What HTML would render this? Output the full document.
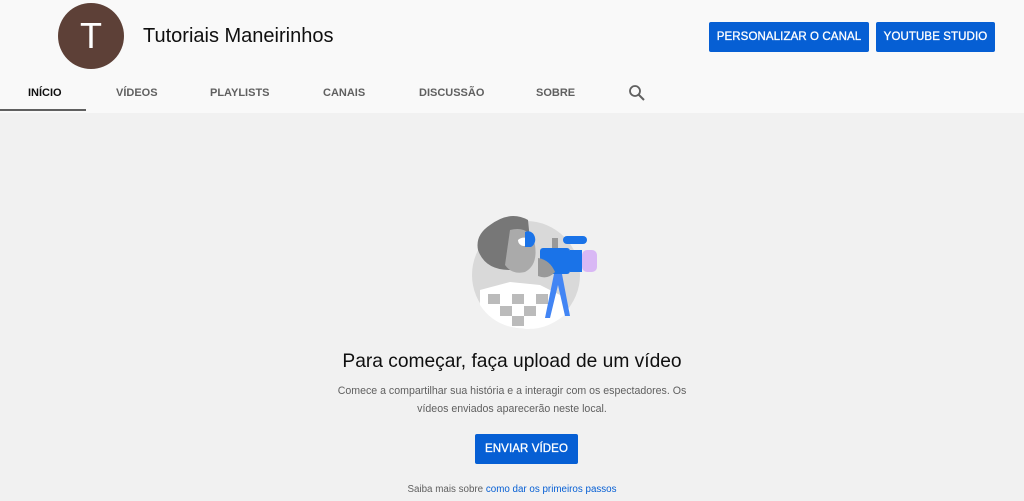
<!DOCTYPE html>
<html><head><meta charset="utf-8"><style>
*{margin:0;padding:0;box-sizing:border-box}
body{width:1024px;height:501px;overflow:hidden;background:#f1f1f1;font-family:"Liberation Sans",Arial,sans-serif;position:relative}
.hdr{position:absolute;left:0;top:0;width:1024px;height:113px;background:#f9f9f9}
.av{position:absolute;left:58px;top:3px;width:66px;height:66px;border-radius:50%;background:#5d4037;color:#fff;font-size:36px;text-align:center;line-height:66px}
.name{position:absolute;left:143px;top:25px;font-size:20px;color:#0f0f0f}
.btn{position:absolute;background:#065fd4;color:#fff;font-size:11.5px;text-align:center;border-radius:2px;letter-spacing:.1px;-webkit-text-stroke:.3px #fff}
.tab{position:absolute;top:87px;font-size:11px;font-weight:bold;color:#606060}
.ul{position:absolute;left:0;top:109px;width:86px;height:2px;background:#606060}
.c{position:absolute;left:0;width:1024px;text-align:center}
</style></head><body>
<div class="hdr">
<div class="av">T</div>
<div class="name">Tutoriais Maneirinhos</div>
<div class="btn" style="left:709px;top:22px;width:160px;height:30px;line-height:30px">PERSONALIZAR O CANAL</div>
<div class="btn" style="left:876px;top:22px;width:119px;height:30px;line-height:30px">YOUTUBE STUDIO</div>
<div class="tab" style="left:28px;color:#0f0f0f">INÍCIO</div>
<div class="tab" style="left:116px">VÍDEOS</div>
<div class="tab" style="left:210px">PLAYLISTS</div>
<div class="tab" style="left:323px">CANAIS</div>
<div class="tab" style="left:419px">DISCUSSÃO</div>
<div class="tab" style="left:536px">SOBRE</div>
<svg style="position:absolute;left:628px;top:84px" width="18" height="18" viewBox="0 0 18 18"><circle cx="7" cy="7" r="5" fill="none" stroke="#606060" stroke-width="1.8"/><path d="M10.5 10.5L16 16" stroke="#606060" stroke-width="2"/></svg>
<div class="ul"></div>
</div>
<svg style="position:absolute;left:470px;top:210px" width="130" height="120" viewBox="0 0 130 120">
<circle cx="56" cy="65" r="54" fill="#d9d9d9"/>
<path d="M10 80 L40 72 L70 75 L90 85 L100 100 Q80 120 56 119 Q25 118 10 95Z" fill="#fff"/>
<g fill="#bbb"><rect x="18" y="84" width="12" height="10"/><rect x="42" y="84" width="12" height="10"/><rect x="66" y="84" width="12" height="10"/><rect x="30" y="96" width="12" height="10"/><rect x="54" y="96" width="12" height="10"/><rect x="42" y="106" width="12" height="10"/></g>
<path d="M20 15 Q40 0 58 10 L60 30 Q50 50 40 60 Q15 60 8 40 Q5 25 20 15Z" fill="#777"/>
<path d="M40 20 Q60 15 65 35 Q68 55 55 62 Q42 65 35 55Z" fill="#aaa"/>
<path d="M48 30 a8 7 0 0 1 12 0 a6 6 0 0 1 -12 0Z" fill="#fff"/>
<path d="M55 22 a7 8 0 0 1 6 15 l-6 0Z" fill="#1a73e8"/>
<rect x="93" y="26" width="24" height="8" rx="4" fill="#1a73e8"/>
<rect x="82" y="28" width="6" height="12" fill="#999"/>
<rect x="70" y="38" width="30" height="26" rx="3" fill="#1a73e8"/>
<rect x="100" y="40" width="12" height="22" fill="#1a73e8"/>
<rect x="112" y="40" width="15" height="22" rx="5" fill="#d9b8f5"/>
<path d="M68 48 Q80 50 85 62 Q78 70 68 66Z" fill="#999"/>
<path d="M84 64 L75 108 L80 108 L88 75 L95 106 L100 106 L92 64Z" fill="#4285f4"/>
</svg>
<div class="c" style="top:351px;font-size:19.2px;color:#0f0f0f">Para começar, faça upload de um vídeo</div>
<div class="c" style="top:382px;font-size:10.6px;color:#606060;line-height:18px">Comece a compartilhar sua história e a interagir com os espectadores. Os<br>vídeos enviados aparecerão neste local.</div>
<div class="btn" style="left:475px;top:434px;width:103px;height:30px;line-height:30px">ENVIAR VÍDEO</div>
<div class="c" style="top:484px;font-size:9.8px;color:#606060">Saiba mais sobre <span style="color:#065fd4">como dar os primeiros passos</span></div>
</body></html>
